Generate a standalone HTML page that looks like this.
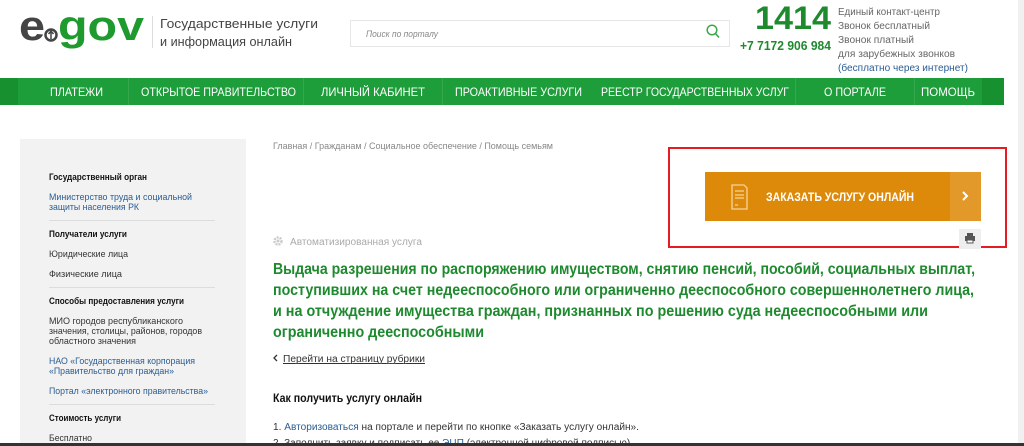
<!DOCTYPE html>
<html><head><meta charset="utf-8">
<style>
*{margin:0;padding:0;box-sizing:border-box}
body{width:1024px;height:446px;overflow:hidden;background:#fff;font-family:"Liberation Sans",sans-serif;position:relative;color:#222}
.a{position:absolute;white-space:nowrap}
svg text{font-family:"Liberation Sans",sans-serif}
</style></head><body>
<div class="a" style="left:1018px;top:0;width:6px;height:446px;background:#f0f0f0"></div>
<div class="a" style="left:0;top:78px;width:1004px;height:27px;background:#1e9e3a"></div>
<div class="a" style="left:0;top:78px;width:18px;height:27px;background:#17902f"></div>
<div class="a" style="left:982px;top:78px;width:22px;height:27px;background:#17902f"></div>
<div class="a" style="left:20px;top:139px;width:226px;height:307px;background:#f2f2f2"></div>
<div class="a" style="left:350px;top:20px;width:380px;height:27px;border:1px solid #e6e6e6"></div>
<div class="a" style="left:668px;top:147px;width:339px;height:101px;border:2px solid #e51c23"></div>
<div class="a" style="left:705px;top:172px;width:276px;height:49px;background:#dd8a0b"></div>
<div class="a" style="left:950px;top:172px;width:31px;height:49px;background:#e3982a"></div>
<div class="a" style="left:959px;top:229px;width:22px;height:20px;background:#eee"></div>
<div class="a" style="left:0;top:443px;width:1024px;height:3px;background:#333"></div>

<svg class="a" style="left:0;top:0" width="1024" height="446" viewBox="0 0 1024 446">
<g font-weight="bold" font-size="42">
<text x="19" y="40" fill="#444" textLength="26" lengthAdjust="spacingAndGlyphs">e</text>
<text x="58" y="40" fill="#1f9a2e" textLength="86" lengthAdjust="spacingAndGlyphs">gov</text>
</g>
<circle cx="51" cy="35" r="5.5" fill="none" stroke="#444" stroke-width="2.5"/>
<path d="M51 31v8M48.5 34l2.5-3 2.5 3" stroke="#444" stroke-width="1.5" fill="none"/>
<rect x="152" y="16" width="1" height="32" fill="#ddd"/>
<g font-size="13" fill="#444">
<text x="160" y="28" textLength="158" lengthAdjust="spacingAndGlyphs">Государственные услуги</text>
<text x="160" y="46" textLength="132" lengthAdjust="spacingAndGlyphs">и информация онлайн</text>
</g>
<text x="366" y="37" font-size="9" font-style="italic" fill="#888" textLength="72" lengthAdjust="spacingAndGlyphs">Поиск по порталу</text>
<circle cx="712" cy="30" r="4.8" fill="none" stroke="#3aa84a" stroke-width="1.5"/>
<path d="M715.5 33.5l3.5 4" stroke="#3aa84a" stroke-width="1.6"/>
<text x="755" y="29" font-size="32" font-weight="bold" fill="#1e8a2e" textLength="76" lengthAdjust="spacingAndGlyphs">1414</text>
<text x="740" y="50" font-size="12.5" font-weight="bold" fill="#1e8a2e" textLength="91" lengthAdjust="spacingAndGlyphs">+7 7172 906 984</text>
<g font-size="10" fill="#666">
<text x="838" y="15" textLength="102" lengthAdjust="spacingAndGlyphs">Единый контакт-центр</text>
<text x="838" y="29" textLength="92" lengthAdjust="spacingAndGlyphs">Звонок бесплатный</text>
<text x="838" y="43" textLength="76" lengthAdjust="spacingAndGlyphs">Звонок платный</text>
<text x="838" y="57" textLength="117" lengthAdjust="spacingAndGlyphs">для зарубежных звонков</text>
<text x="838" y="71" fill="#2a5d94" textLength="130" lengthAdjust="spacingAndGlyphs">(бесплатно через интернет)</text>
</g>
<g fill="#35a84d"><rect x="128" y="78" width="1" height="27"/><rect x="303" y="78" width="1" height="27"/><rect x="442" y="78" width="1" height="27"/><rect x="795" y="78" width="1" height="27"/><rect x="914" y="78" width="1" height="27"/></g>
<g font-size="12" fill="#fff">
<text x="50" y="96" textLength="53" lengthAdjust="spacingAndGlyphs">ПЛАТЕЖИ</text>
<text x="141" y="96" textLength="155" lengthAdjust="spacingAndGlyphs">ОТКРЫТОЕ ПРАВИТЕЛЬСТВО</text>
<text x="321" y="96" textLength="104" lengthAdjust="spacingAndGlyphs">ЛИЧНЫЙ КАБИНЕТ</text>
<text x="455" y="96" textLength="127" lengthAdjust="spacingAndGlyphs">ПРОАКТИВНЫЕ УСЛУГИ</text>
<text x="601" y="96" textLength="188" lengthAdjust="spacingAndGlyphs">РЕЕСТР ГОСУДАРСТВЕННЫХ УСЛУГ</text>
<text x="824" y="96" textLength="62" lengthAdjust="spacingAndGlyphs">О ПОРТАЛЕ</text>
<text x="921" y="96" textLength="54" lengthAdjust="spacingAndGlyphs">ПОМОЩЬ</text>
</g>
<g font-size="9.5" fill="#333">
<text x="49" y="180" font-weight="bold" fill="#111" textLength="98" lengthAdjust="spacingAndGlyphs">Государственный орган</text>
<text x="49" y="200" fill="#2a5d94" textLength="143" lengthAdjust="spacingAndGlyphs">Министерство труда и социальной</text>
<text x="49" y="210" fill="#2a5d94" textLength="90" lengthAdjust="spacingAndGlyphs">защиты населения РК</text>
<rect x="49" y="220" width="166" height="1" fill="#ddd"/>
<text x="49" y="237" font-weight="bold" fill="#111" textLength="78" lengthAdjust="spacingAndGlyphs">Получатели услуги</text>
<text x="49" y="257" textLength="79" lengthAdjust="spacingAndGlyphs">Юридические лица</text>
<text x="49" y="277" textLength="73" lengthAdjust="spacingAndGlyphs">Физические лица</text>
<rect x="49" y="287" width="166" height="1" fill="#ddd"/>
<text x="49" y="304" font-weight="bold" fill="#111" textLength="135" lengthAdjust="spacingAndGlyphs">Способы предоставления услуги</text>
<text x="49" y="324" textLength="134" lengthAdjust="spacingAndGlyphs">МИО городов республиканского</text>
<text x="49" y="334" textLength="153" lengthAdjust="spacingAndGlyphs">значения, столицы, районов, городов</text>
<text x="49" y="344" textLength="87" lengthAdjust="spacingAndGlyphs">областного значения</text>
<text x="49" y="364" fill="#2a5d94" textLength="146" lengthAdjust="spacingAndGlyphs">НАО «Государственная корпорация</text>
<text x="49" y="374" fill="#2a5d94" textLength="125" lengthAdjust="spacingAndGlyphs">«Правительство для граждан»</text>
<text x="49" y="394" fill="#2a5d94" textLength="159" lengthAdjust="spacingAndGlyphs">Портал «электронного правительства»</text>
<rect x="49" y="404" width="166" height="1" fill="#ddd"/>
<text x="49" y="421" font-weight="bold" fill="#111" textLength="72" lengthAdjust="spacingAndGlyphs">Стоимость услуги</text>
<text x="49" y="441" textLength="43" lengthAdjust="spacingAndGlyphs">Бесплатно</text>
</g>
<text x="273" y="149" font-size="9" fill="#888" textLength="280" lengthAdjust="spacingAndGlyphs">Главная / Гражданам / Социальное обеспечение / Помощь семьям</text>
<path d="M732 185h12l3 3v21h-15z" fill="none" stroke="#f5d39a" stroke-width="1.3"/>
<path d="M735 191h9M735 195h9M735 198h9M735 205h3" stroke="#f5d39a" stroke-width="1.2"/>
<text x="766" y="201" font-size="11.5" font-weight="bold" fill="#fff" textLength="148" lengthAdjust="spacingAndGlyphs">ЗАКАЗАТЬ УСЛУГУ ОНЛАЙН</text>
<path d="M963 192l4 4-4 4" stroke="#fff" stroke-width="2" fill="none"/>
<rect x="967" y="233" width="6" height="3" fill="#555"/><rect x="965" y="236" width="10" height="5" fill="#555"/><rect x="967" y="240" width="6" height="3" fill="#fff" stroke="#555"/>
<circle cx="278" cy="241" r="3.5" fill="none" stroke="#ccc" stroke-width="2.5" stroke-dasharray="2 1"/><circle cx="278" cy="241" r="1.5" fill="#ccc"/>
<text x="290" y="245" font-size="10" fill="#aaa" textLength="132" lengthAdjust="spacingAndGlyphs">Автоматизированная услуга</text>
<g font-size="15.5" font-weight="bold" fill="#1e8a2e">
<text x="273" y="274" textLength="702" lengthAdjust="spacingAndGlyphs">Выдача разрешения по распоряжению имуществом, снятию пенсий, пособий, социальных выплат,</text>
<text x="273" y="295" textLength="701" lengthAdjust="spacingAndGlyphs">поступивших на счет недееспособного или ограниченно дееспособного совершеннолетнего лица,</text>
<text x="273" y="316" textLength="655" lengthAdjust="spacingAndGlyphs">и на отчуждение имущества граждан, признанных по решению суда недееспособными или</text>
<text x="273" y="337" textLength="211" lengthAdjust="spacingAndGlyphs">ограниченно дееспособными</text>
</g>
<path d="M277 355l-3 3 3 3" stroke="#333" stroke-width="1.3" fill="none"/>
<text x="283" y="362" font-size="10" fill="#333" text-decoration="underline" textLength="142" lengthAdjust="spacingAndGlyphs">Перейти на страницу рубрики</text>
<rect x="283" y="363" width="142" height="0.8" fill="#333"/>
<text x="273" y="402" font-size="12" font-weight="bold" fill="#111" textLength="149" lengthAdjust="spacingAndGlyphs">Как получить услугу онлайн</text>
<g font-size="10" fill="#333">
<text x="273" y="430" textLength="366" lengthAdjust="spacingAndGlyphs">1. <tspan fill="#2a5d94">Авторизоваться</tspan> на портале и перейти по кнопке «Заказать услугу онлайн».</text>
<text x="273" y="446" textLength="360" lengthAdjust="spacingAndGlyphs">2. Заполнить заявку и подписать ее <tspan fill="#2a5d94">ЭЦП</tspan> (электронной цифровой подписью).</text>
</g>
</svg>
<div class="a" style="left:0;top:443px;width:1024px;height:3px;background:#333"></div>
</body></html>
